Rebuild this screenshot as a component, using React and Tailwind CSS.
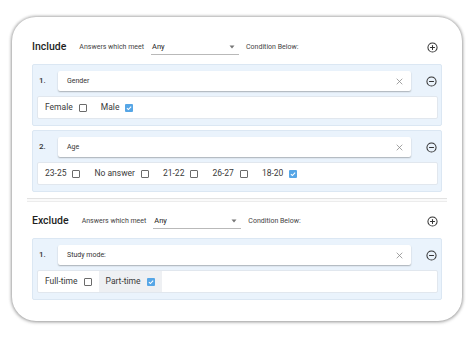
import React from "react";

const font = { fontFamily: "Roboto, 'Noto Sans', sans-serif" };

function Box({ checked }) {
  if (checked) {
    return (
      <span className="flex h-[8px] w-[8px] items-center justify-center rounded-[1px] bg-[#56a6e6]">
        <svg width="6" height="6" viewBox="0 0 10 10">
          <path d="M1.5 5.2 L4 7.6 L8.6 2.6" fill="none" stroke="white" strokeWidth="1.8" />
        </svg>
      </span>
    );
  }
  return <span className="block h-[8px] w-[8px] rounded-[1px] border border-[#6b6b6b] bg-white" />;
}

function CircleIcon({ plus }) {
  return (
    <svg width="11" height="11" viewBox="0 0 24 24" fill="none" stroke="#333" strokeWidth="2.2" strokeLinecap="round">
      <circle cx="12" cy="12" r="10" />
      <path d="M7.5 12h9" />
      {plus && <path d="M12 7.5v9" />}
    </svg>
  );
}

function Header({ title }) {
  return (
    <div className="flex h-[16px] items-center">
      <span className="text-[10.5px] font-medium text-[#1f1f1f]">{title}</span>
      <span className="ml-[13px] text-[7px] text-[#444]">Answers which meet</span>
      <div className="ml-[7px] flex h-[16px] w-[88px] items-center justify-between border-b border-[#b9b9b9] pl-[1px] pr-[4px]">
        <span className="text-[7.5px] text-[#222]">Any</span>
        <svg width="6" height="4" viewBox="0 0 6 4">
          <path d="M0.5 0.5 L5.5 0.5 L3 3.5 Z" fill="#777" />
        </svg>
      </div>
      <span className="ml-[7px] text-[7px] text-[#444]">Condition Below:</span>
      <div className="ml-auto mr-[4px] flex items-center">
        <CircleIcon plus />
      </div>
    </div>
  );
}

function Panel({ num, label, options }) {
  return (
    <div className="rounded-[2px] border border-[#dbe7f3] bg-[#eaf3fc] pb-[6px] pl-[4px] pr-[3px] pt-[6px]">
      <div className="flex h-[20px] items-center">
        <span className="w-[21px] pl-[2px] text-[8px] font-medium text-[#333]">{num}</span>
        <div className="flex h-[20px] flex-1 items-center justify-between rounded-[2px] bg-white pl-[9px] pr-[8px] shadow-[0_1px_1.5px_rgba(0,0,0,0.28)]">
          <span className="text-[7px] text-[#333]">{label}</span>
          <svg width="7" height="7" viewBox="0 0 10 10">
            <path d="M1 1 L9 9 M9 1 L1 9" stroke="#888" strokeWidth="1.1" />
          </svg>
        </div>
        <div className="ml-[15px] mr-[1px] flex items-center">
          <CircleIcon />
        </div>
      </div>
      <div className="mt-[5px] flex h-[23px] items-stretch rounded-[2px] border border-[#e1e7ee] bg-white">
        {options.map((o) => (
          <div
            key={o.t}
            className={`flex items-center gap-[6px] px-[7px] ${o.hl ? "bg-[#eef0f3]" : ""}`}
          >
            <span className="text-[8.5px] text-[#3a3a3a]">{o.t}</span>
            <Box checked={o.c} />
          </div>
        ))}
      </div>
    </div>
  );
}

export default function App() {
  return (
    <div className="h-[338px] w-[474px] bg-white pl-[12px] pt-[17px]" style={font}>
      <div className="h-[304px] w-[450px] rounded-[24px] bg-white px-[20px] pt-[22px] shadow-[0_0_3px_1px_rgba(0,0,0,0.28),0_1px_4px_rgba(0,0,0,0.18)]">
        <Header title="Include" />
        <div className="mt-[9px] flex flex-col gap-[4px]">
          <Panel
            num="1."
            label="Gender"
            options={[
              { t: "Female", c: false },
              { t: "Male", c: true },
            ]}
          />
          <Panel
            num="2."
            label="Age"
            options={[
              { t: "23-25", c: false },
              { t: "No answer", c: false },
              { t: "21-22", c: false },
              { t: "26-27", c: false },
              { t: "18-20", c: true },
            ]}
          />
        </div>
        <div className="-mx-[5px] mt-[6px] h-[4px] border-b border-t border-b-[#ececec] border-t-[#e2e2e2] bg-[#fafafa]" />
        <div className="mt-[11px]">
          <Header title="Exclude" />
        </div>
        <div className="mt-[9px]">
          <Panel
            num="1."
            label="Study mode:"
            options={[
              { t: "Full-time", c: false },
              { t: "Part-time", c: true, hl: true },
            ]}
          />
        </div>
      </div>
    </div>
  );
}
